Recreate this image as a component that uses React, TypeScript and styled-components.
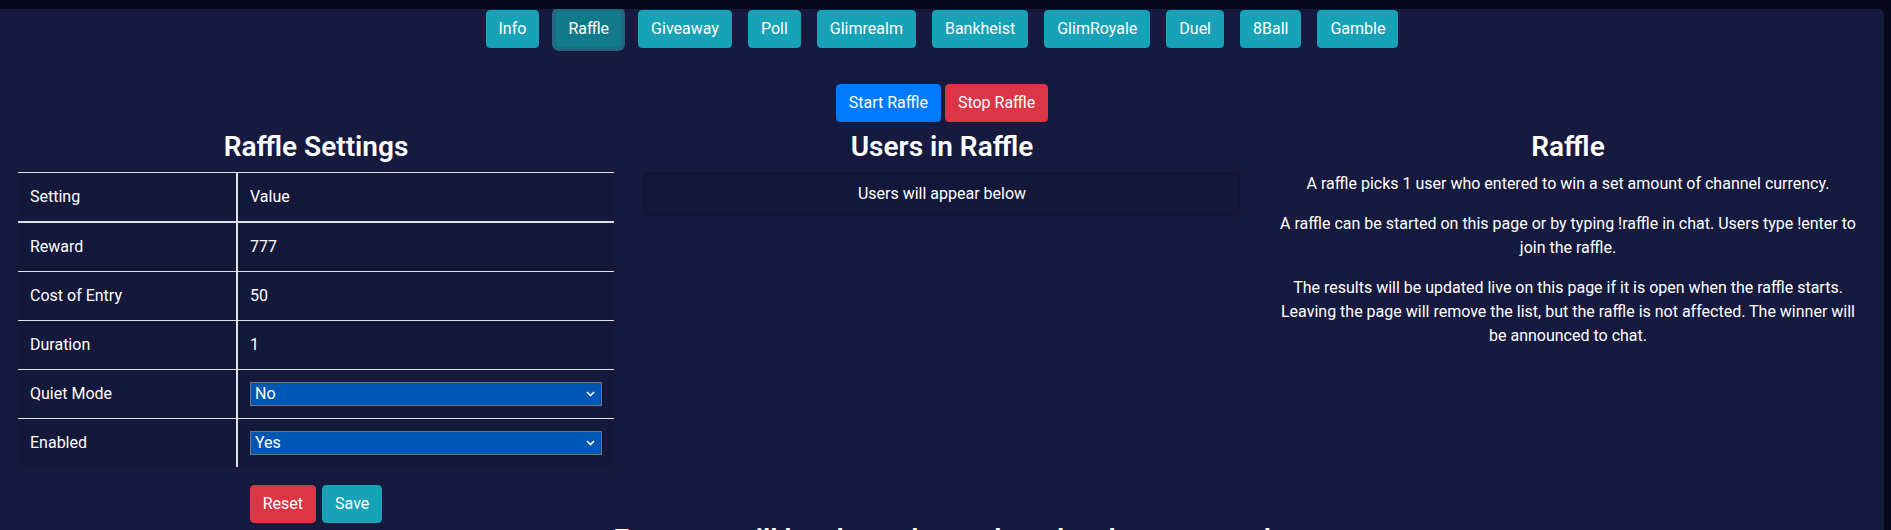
import React from 'react'
import styled, { createGlobalStyle, css } from 'styled-components'

const FONT = `Roboto, 'Noto Sans', sans-serif`

const GlobalStyle = createGlobalStyle`
  * { box-sizing: border-box; }
  html, body {
    margin: 0;
    padding: 0;
    background: #060819;
    overflow: hidden;
  }
  body {
    font-family: ${FONT};
    font-size: 16px;
    line-height: 1.5;
    color: #ffffff;
  }
`

type Variant = 'info' | 'primary' | 'danger'

const variantColors: Record<Variant, string> = {
  info: '#17a2b8',
  primary: '#007bff',
  danger: '#dc3545',
}

const Panel = styled.div`
  margin: 9px 7px 0 0;
  min-height: calc(100vh - 9px);
  background: #161a3f;
  border-top-right-radius: 6px;
  overflow: hidden;
`

const Nav = styled.nav`
  display: flex;
  justify-content: center;
  gap: 16px;
  padding-top: 1px;
`

const Button = styled.button<{ $variant: Variant; $active?: boolean }>`
  font-family: inherit;
  font-size: 16px;
  line-height: 1.5;
  padding: 6px 12px;
  border-radius: 4px;
  color: #ffffff;
  cursor: pointer;
  background: ${(p) => variantColors[p.$variant]};
  border: 1px solid ${(p) => variantColors[p.$variant]};

  ${(p) =>
    p.$active &&
    css`
      background: #117a8b;
      border-color: #10707f;
      box-shadow: 0 0 0 3px #286581;
    `}
`

const ActionRow = styled.div<{ $gap?: number }>`
  display: flex;
  justify-content: center;
  gap: ${(p) => p.$gap ?? 4}px;
`

const TopActions = styled(ActionRow)`
  margin-top: 36px;
`

const Columns = styled.div`
  display: grid;
  grid-template-columns: repeat(3, 1fr);
  margin-top: 8px;
  padding: 0 3px;
`

const Column = styled.section`
  padding: 0 15px;
`

const Heading = styled.h3`
  margin: 0 0 8px;
  font-size: 28px;
  font-weight: 600;
  line-height: 1.2;
  text-align: center;
`

const Table = styled.table`
  width: 100%;
  border-collapse: collapse;
  background: #14183b;
  margin-bottom: 18px;

  th,
  td {
    padding: 12px;
    text-align: left;
    font-weight: 400;
    vertical-align: top;
    border-top: 1px solid #dee2e6;
  }

  th:first-child,
  td:first-child {
    width: 219px;
    border-right: 2px solid #dee2e6;
  }

  thead th {
    border-bottom: 2px solid #dee2e6;
  }
`

const SelectWrap = styled.div`
  position: relative;
  height: 24px;
`

const Select = styled.select`
  appearance: none;
  width: 100%;
  height: 24px;
  padding: 0 20px 0 4px;
  font-family: inherit;
  font-size: 16px;
  color: #ffffff;
  background: #0056b3;
  border: 1px solid #6c757d;
  border-radius: 0;
`

const Chevron = styled.svg`
  position: absolute;
  right: 7px;
  top: 9px;
  pointer-events: none;
`

const UsersBox = styled.div`
  padding: 9px 12px;
  text-align: center;
  background: #13173a;
  border: 1px solid #111430;
  border-radius: 4px;
`

const Paragraph = styled.p`
  margin: 0 0 16px;
  text-align: center;
`

const BottomHeading = styled.h2`
  margin: 0;
  font-size: 28px;
  font-weight: 600;
  line-height: 1.2;
  text-align: center;
`

const navItems = [
  'Info',
  'Raffle',
  'Giveaway',
  'Poll',
  'Glimrealm',
  'Bankheist',
  'GlimRoyale',
  'Duel',
  '8Ball',
  'Gamble',
]

const settings = [
  { name: 'Reward', value: '777' },
  { name: 'Cost of Entry', value: '50' },
  { name: 'Duration', value: '1' },
]

const toggles = [
  { name: 'Quiet Mode', value: 'No' },
  { name: 'Enabled', value: 'Yes' },
]

function ChevronIcon() {
  return (
    <Chevron width="9" height="6" viewBox="0 0 9 6">
      <path d="M1 1l3.5 3.5L8 1" fill="none" stroke="#ffffff" strokeWidth="1.6" />
    </Chevron>
  )
}

export default function App() {
  return (
    <>
      <GlobalStyle />
      <Panel>
        <Nav>
          {navItems.map((item) => (
            <Button key={item} $variant="info" $active={item === 'Raffle'}>
              {item}
            </Button>
          ))}
        </Nav>

        <TopActions>
          <Button $variant="primary">Start Raffle</Button>
          <Button $variant="danger">Stop Raffle</Button>
        </TopActions>

        <Columns>
          <Column>
            <Heading>Raffle Settings</Heading>
            <Table>
              <thead>
                <tr>
                  <th>Setting</th>
                  <th>Value</th>
                </tr>
              </thead>
              <tbody>
                {settings.map((s) => (
                  <tr key={s.name}>
                    <td>{s.name}</td>
                    <td>{s.value}</td>
                  </tr>
                ))}
                {toggles.map((t) => (
                  <tr key={t.name}>
                    <td>{t.name}</td>
                    <td>
                      <SelectWrap>
                        <Select defaultValue={t.value}>
                          <option>Yes</option>
                          <option>No</option>
                        </Select>
                        <ChevronIcon />
                      </SelectWrap>
                    </td>
                  </tr>
                ))}
              </tbody>
            </Table>
            <ActionRow $gap={6}>
              <Button $variant="danger">Reset</Button>
              <Button $variant="info">Save</Button>
            </ActionRow>
          </Column>

          <Column>
            <Heading>Users in Raffle</Heading>
            <UsersBox>Users will appear below</UsersBox>
          </Column>

          <Column>
            <Heading>Raffle</Heading>
            <Paragraph>
              A raffle picks 1 user who entered to win a set amount of channel currency.
            </Paragraph>
            <Paragraph>
              A raffle can be started on this page or by typing !raffle in chat. Users type
              !enter to join the raffle.
            </Paragraph>
            <Paragraph>
              The results will be updated live on this page if it is open when the raffle
              starts. Leaving the page will remove the list, but the raffle is not affected.
              The winner will be{'\u00a0'}announced to chat.
            </Paragraph>
          </Column>
        </Columns>

        <BottomHeading>Everyone will be shown here when they have entered</BottomHeading>
      </Panel>
    </>
  )
}
